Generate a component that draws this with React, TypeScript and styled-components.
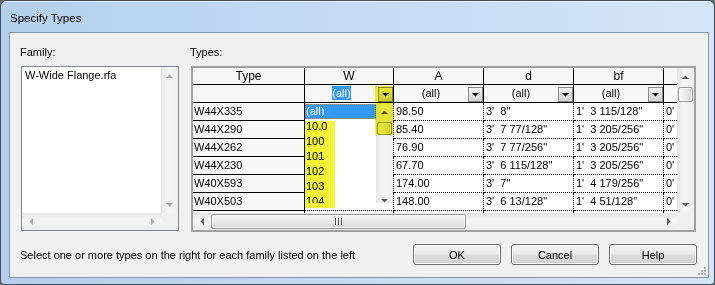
import React from "react";
import styled, { createGlobalStyle } from "styled-components";

const GlobalStyle = createGlobalStyle`
  html, body { margin: 0; padding: 0; background: #5d6e62; }
  body { font-family: "Liberation Sans", Arial, sans-serif; font-size: 11px; color: #000; }
  #root { width: 715px; height: 285px; }
  * { box-sizing: border-box; }
`;

const Window = styled.div`
  width: 715px;
  height: 285px;
  border: 1px solid #434f5c;
  border-radius: 7px 7px 4px 4px;
  background: linear-gradient(to right, #b4cfeb 0%, #c3daf2 45%, #d3e5f8 100%);
  display: flex;
  flex-direction: column;
  overflow: hidden;
`;

const TitleBar = styled.div`
  height: 31px;
  display: flex;
  align-items: center;
  padding: 3px 0 0 9px;
  font-size: 11.5px;
  color: #000;
  box-shadow: inset 0 1px 0 rgba(255, 255, 255, 0.6);
`;

const Client = styled.div`
  position: relative;
  flex: 1;
  margin: 0 5px 6px 8px;
  border: 1px solid #8595a6;
  background: #f0f0f0;
  padding: 12px 11px 0 11px;
  display: flex;
  flex-direction: column;
`;

const Panels = styled.div`
  display: grid;
  grid-template-columns: 158px 505px;
  grid-template-rows: 15px 166px;
  column-gap: 12px;
  row-gap: 6px;
`;

const Label = styled.div`
  font-size: 11px;
  line-height: 15px;
  margin-left: -1px;
`;

const ListBox = styled.div`
  height: 165px;
  border: 1px solid #828790;
  background: #fff;
  display: grid;
  grid-template-columns: 139px 17px;
  grid-template-rows: 146px 17px;
`;

const ListItem = styled.div`
  padding: 1px 0 0 3px;
  line-height: 15px;
  font-size: 11px;
  white-space: nowrap;
`;

const ScrollV = styled.div`
  display: flex;
  flex-direction: column;
  background: linear-gradient(to right, #e6e6e6, #f4f4f4 40%, #eeeeee);
  height: 100%;
`;

const ScrollH = styled.div`
  display: flex;
  flex-direction: row;
  background: linear-gradient(to bottom, #e6e6e6, #f4f4f4 40%, #eeeeee);
  width: 100%;
`;

const ArrowBox = styled.div`
  flex: 0 0 17px;
  width: 17px;
  height: 17px;
  display: flex;
  align-items: center;
  justify-content: center;
`;

const Track = styled.div`
  flex: 1;
  display: flex;
`;

const ThumbV = styled.div<{ $top: number; $size: number }>`
  margin: ${(p) => p.$top}px 1px 0 1px;
  width: 15px;
  height: ${(p) => p.$size}px;
  border: 1px solid #979797;
  border-radius: 2px;
  background: linear-gradient(to right, #f6f6f6, #e9e9e9 50%, #d9d9d9);
  box-shadow: inset 0 0 0 1px #fafafa;
`;

const ThumbH = styled.div<{ $left: number; $size: number }>`
  margin: 1px 0 1px ${(p) => p.$left}px;
  height: 15px;
  width: ${(p) => p.$size}px;
  border: 1px solid #979797;
  border-radius: 2px;
  background: linear-gradient(to bottom, #f6f6f6, #e9e9e9 50%, #d9d9d9);
  box-shadow: inset 0 0 0 1px #fafafa;
  display: flex;
  align-items: center;
  justify-content: center;
`;

const Corner = styled.div`
  background: #f0f0f0;
`;

type Dir = "up" | "down" | "left" | "right";

const Arrow: React.FC<{ dir: Dir; color: string }> = ({ dir, color }) => {
  const pts: Record<Dir, string> = {
    up: "0,4 7,4 3.5,0.5",
    down: "0,0 7,0 3.5,3.5",
    left: "4,0 4,7 0.5,3.5",
    right: "0,0 0,7 3.5,3.5",
  };
  const vertical = dir === "up" || dir === "down";
  return (
    <svg width={vertical ? 7 : 4} height={vertical ? 4 : 7} viewBox={vertical ? "0 0 7 4" : "0 0 4 7"}>
      <polygon points={pts[dir]} fill={color} />
    </svg>
  );
};

const Grip: React.FC = () => (
  <svg width="8" height="7" viewBox="0 0 8 7">
    {[0, 3, 6].map((x) => (
      <React.Fragment key={x}>
        <rect x={x} y={0} width="1" height="7" fill="#555" />
        <rect x={x + 1} y={0} width="1" height="7" fill="#fff" />
      </React.Fragment>
    ))}
  </svg>
);

const GridFrame = styled.div`
  height: 166px;
  border: 2px solid #a0a0a0;
  background: #f0f0f0;
  display: grid;
  grid-template-columns: 484px 17px;
  grid-template-rows: 145px 17px;
`;

const Viewport = styled.div`
  position: relative;
  overflow: hidden;
  background: #fff;
`;

const Table = styled.div`
  display: grid;
  grid-template-columns: 112px 89px 90px 90px 90px 13px;
  grid-template-rows: 17px 18px repeat(7, 18px);
`;

const HeaderCell = styled.div`
  border-right: 1px solid #000;
  border-bottom: 1px solid #000;
  background: #f6f6f6;
  text-align: center;
  font-size: 12px;
  line-height: 16px;
`;

const EdgeHeader = styled.div`
  border-bottom: 1px solid #000;
  background: #f6f6f6;
`;

const FilterCell = styled.div`
  border-right: 1px solid #000;
  border-bottom: 1px solid #000;
  background: #f6f6f6;
  display: flex;
  align-items: flex-start;
`;

const FilterText = styled.div`
  flex: 1;
  text-align: center;
  line-height: 17px;
  font-size: 11px;
`;

const SelectedText = styled.span`
  background: #3399ff;
  color: #fff;
  padding: 1px 0;
`;

const DropBtn = styled.div`
  flex: 0 0 15px;
  height: 15px;
  margin-top: 2px;
  border: 1px solid #8a8a8a;
  background: linear-gradient(to bottom, #f4f4f4, #e4e4e4 50%, #d2d2d2);
  display: flex;
  align-items: center;
  justify-content: center;
`;

const TypeCell = styled.div`
  border-right: 1px solid #000;
  border-bottom: 1px solid #000;
  background: #f8f8f8;
  padding-left: 1px;
  line-height: 17px;
  font-size: 11px;
  white-space: pre;
`;

const DataCell = styled.div<{ $last?: boolean }>`
  border-right: ${(p) => (p.$last ? "none" : "1px dotted #000")};
  border-bottom: 1px dotted #000;
  background: #fff;
  padding-left: 2px;
  line-height: 17px;
  font-size: 11px;
  white-space: pre;
  overflow: hidden;
`;

const DropList = styled.div`
  position: absolute;
  left: 112px;
  top: 35px;
  width: 88px;
  height: 100px;
  background: #fff;
  display: grid;
  grid-template-columns: 71px 17px;
  overflow: hidden;
`;

const DropItems = styled.div`
  padding-top: 1px;
`;

const DropItem = styled.div<{ $selected?: boolean }>`
  height: 15px;
  line-height: 15px;
  font-size: 11px;
  padding-left: 1px;
  background: ${(p) => (p.$selected ? "#3399ff" : "transparent")};
  color: ${(p) => (p.$selected ? "#fff" : "#000")};
  outline: ${(p) => (p.$selected ? "1px dotted #d2863a" : "none")};
  outline-offset: -1px;
`;

const Mark = styled.div<{ $l: number; $t: number; $w: number; $h: number }>`
  position: absolute;
  left: ${(p) => p.$l}px;
  top: ${(p) => p.$t}px;
  width: ${(p) => p.$w}px;
  height: ${(p) => p.$h}px;
  background: #f3f33a;
  mix-blend-mode: multiply;
  pointer-events: none;
`;

const Footer = styled.div`
  margin-top: 12px;
  height: 21px;
  display: flex;
  align-items: center;
  gap: 10px;
`;

const Message = styled.div`
  flex: 1;
  font-size: 11px;
  margin-left: -1px;
`;

const Button = styled.button`
  width: 88px;
  height: 21px;
  border: 1px solid #707070;
  border-radius: 3px;
  background: linear-gradient(to bottom, #f2f2f2 0%, #ebebeb 48%, #dddddd 52%, #cfcfcf 100%);
  box-shadow: inset 0 0 0 1px #fbfbfb;
  font-family: "Liberation Sans", Arial, sans-serif;
  font-size: 11px;
  color: #000;
  padding: 0;
`;

const GripBox = styled.div`
  position: absolute;
  right: 2px;
  bottom: 2px;
  display: flex;
`;

const rows = [
  { type: "W44X335", a: "98.50", d: "3'  8\"", bf: "1'  3 115/128\"" },
  { type: "W44X290", a: "85.40", d: "3'  7 77/128\"", bf: "1'  3 205/256\"" },
  { type: "W44X262", a: "76.90", d: "3'  7 77/256\"", bf: "1'  3 205/256\"" },
  { type: "W44X230", a: "67.70", d: "3'  6 115/128\"", bf: "1'  3 205/256\"" },
  { type: "W40X593", a: "174.00", d: "3'  7\"", bf: "1'  4 179/256\"" },
  { type: "W40X503", a: "148.00", d: "3'  6 13/128\"", bf: "1'  4 51/128\"" },
  { type: "", a: "", d: "", bf: "" },
];

const dropValues = ["10.0", "100", "101", "102", "103", "104"];

const DARK = "#5a5a5a";
const LIGHT = "#a8a8a8";

export default function App() {
  return (
    <>
      <GlobalStyle />
      <Window>
        <TitleBar>Specify Types</TitleBar>
        <Client>
          <Panels>
            <Label>Family:</Label>
            <Label>Types:</Label>
            <ListBox>
              <div>
                <ListItem>W-Wide Flange.rfa</ListItem>
              </div>
              <ScrollV>
                <ArrowBox><Arrow dir="up" color={LIGHT} /></ArrowBox>
                <Track />
                <ArrowBox><Arrow dir="down" color={LIGHT} /></ArrowBox>
              </ScrollV>
              <ScrollH>
                <ArrowBox><Arrow dir="left" color={LIGHT} /></ArrowBox>
                <Track />
                <ArrowBox><Arrow dir="right" color={LIGHT} /></ArrowBox>
              </ScrollH>
              <Corner />
            </ListBox>
            <GridFrame>
              <Viewport>
                <Table>
                  <HeaderCell>Type</HeaderCell>
                  <HeaderCell>W</HeaderCell>
                  <HeaderCell>A</HeaderCell>
                  <HeaderCell>d</HeaderCell>
                  <HeaderCell>bf</HeaderCell>
                  <EdgeHeader />
                  <FilterCell />
                  {["W", "A", "d", "bf"].map((c) => (
                    <FilterCell key={c}>
                      <FilterText>{c === "W" ? <SelectedText>(all)</SelectedText> : "(all)"}</FilterText>
                      <DropBtn><Arrow dir="down" color="#000" /></DropBtn>
                    </FilterCell>
                  ))}
                  <EdgeHeader />
                  {rows.map((r, i) => (
                    <React.Fragment key={i}>
                      <TypeCell>{r.type}</TypeCell>
                      <DataCell />
                      <DataCell>{r.a}</DataCell>
                      <DataCell>{r.d}</DataCell>
                      <DataCell>{r.bf}</DataCell>
                      <DataCell $last>{r.type ? "0'" : ""}</DataCell>
                    </React.Fragment>
                  ))}
                </Table>
                <DropList>
                  <DropItems>
                    <DropItem $selected>(all)</DropItem>
                    {dropValues.map((v) => (
                      <DropItem key={v}>{v}</DropItem>
                    ))}
                  </DropItems>
                  <ScrollV>
                    <ArrowBox><Arrow dir="up" color={DARK} /></ArrowBox>
                    <Track><ThumbV $top={2} $size={13} /></Track>
                    <ArrowBox><Arrow dir="down" color={DARK} /></ArrowBox>
                  </ScrollV>
                </DropList>
                <Mark $l={182} $t={18} $w={19} $h={49} />
                <Mark $l={111} $t={53} $w={31} $h={87} />
              </Viewport>
              <ScrollV>
                <ArrowBox><Arrow dir="up" color={DARK} /></ArrowBox>
                <Track><ThumbV $top={2} $size={15} /></Track>
                <ArrowBox><Arrow dir="down" color={DARK} /></ArrowBox>
              </ScrollV>
              <ScrollH>
                <ArrowBox><Arrow dir="left" color={DARK} /></ArrowBox>
                <Track><ThumbH $left={1} $size={255}><Grip /></ThumbH></Track>
                <ArrowBox><Arrow dir="right" color={DARK} /></ArrowBox>
              </ScrollH>
              <Corner />
            </GridFrame>
          </Panels>
          <Footer>
            <Message>Select one or more types on the right for each family listed on the left</Message>
            <Button>OK</Button>
            <Button>Cancel</Button>
            <Button>Help</Button>
          </Footer>
          <GripBox>
            <svg width="9" height="9" viewBox="0 0 9 9">
              {[[7, 1], [7, 4], [4, 4], [7, 7], [4, 7], [1, 7]].map(([x, y]) => (
                <rect key={`${x}-${y}`} x={x} y={y} width="2" height="2" fill="#b5b5b5" />
              ))}
            </svg>
          </GripBox>
        </Client>
      </Window>
    </>
  );
}
